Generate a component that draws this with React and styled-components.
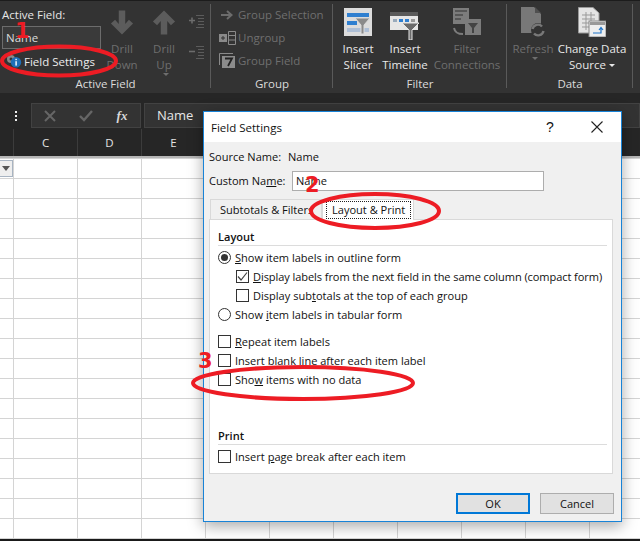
import React from "react";
import styled, { createGlobalStyle } from "styled-components";

const Global = createGlobalStyle`
  html, body { margin: 0; padding: 0; background: #fff; }
  body { width: 640px; height: 543px; overflow: hidden; font-family: "Open Sans", "Noto Sans", sans-serif; font-size: 11.05px; }
  * { box-sizing: border-box; }
`;

const Page = styled.div`
  position: relative; width: 640px; height: 543px; overflow: hidden;
  display: flex; flex-direction: column; background: #fff;
`;
const Ribbon = styled.div`
  height: 93px; flex: none; background: #333; border-top: 1px solid #1c1c1c; display: flex; color: #e6e6e6; font-size: 11.5px;
`;
const Group = styled.section`
  width: ${p => p.$w}px; flex: none; height: 90px; margin-top: 2px;
  display: flex; flex-direction: column; position: relative;
  &::after { content: ""; position: absolute; right: 0; top: 1px; width: 1px; height: 84px; background: #5a5a5a; }
`;
const GroupBody = styled.div`
  flex: 1; display: flex; align-items: flex-start; min-height: 0; padding-left: ${p => p.$pl || 0}px;
`;
const GroupName = styled.div`
  height: 17px; line-height: 16px; text-align: center; color: #dcdcdc;
`;
const ActiveCol = styled.div`
  width: 104px; flex: none; padding: 4px 0 0 2px; display: flex; flex-direction: column;
`;
const ActiveLabel = styled.div` height: 19px; line-height: 16px; color: #e6e6e6; `;
const NameBox = styled.div`
  width: 99px; height: 23px; border: 1px solid #6c6c6c; background: #3a3a3a; padding-left: 3px; line-height: 21px; color: #dcdcdc;
`;
const SettingsRow = styled.div`
  display: flex; align-items: center; gap: 2px; height: 24px; padding-left: 4px; color: #ececec; white-space: nowrap;
`;
const BigBtn = styled.div`
  width: ${p => p.$w}px; flex: none; display: flex; flex-direction: column; align-items: center;
  color: ${p => (p.$dim ? "#6e6e6e" : "#e8e8e8")}; line-height: 16px; text-align: center; white-space: nowrap;
`;
const BigIcon = styled.div` height: 36px; display: flex; align-items: center; justify-content: center; margin-top: 1px; margin-bottom: 1px; `;
const Caret = styled.span`
  display: inline-block; width: 0; height: 0; border: 3px solid transparent; border-top: 3px solid currentColor; border-bottom: 0; vertical-align: middle; margin-left: 3px;
`;
const SmallCol = styled.div`
  display: flex; flex-direction: column; gap: 16px; padding-top: 11px; padding-left: 1px;
`;
const ListCol = styled.div`
  display: flex; flex-direction: column; padding-left: 7px;
`;
const ListRow = styled.div`
  display: flex; align-items: center; gap: 2px; height: 23px; color: #6f6f6f; white-space: nowrap;
`;
const ListIcon = styled.div` width: 18px; display: flex; justify-content: center; `;

const Gap = styled.div` height: 10px; flex: none; background: #262626; `;
const FormulaBar = styled.div`
  height: 26px; flex: none; background: #262626; display: flex; align-items: stretch;
`;
const Dots = styled.div`
  width: 31px; flex: none; display: flex; flex-direction: column; align-items: center; justify-content: center; gap: 2px; padding-left: 1px;
  i { width: 2px; height: 2px; background: #eee; display: block; }
`;
const FxBox = styled.div`
  width: 110px; flex: none; height: 25px; background: #333; border: 1px solid #424242;
  display: grid; grid-template-columns: repeat(3, 36px); justify-items: center; align-items: center;
`;
const FormulaInput = styled.div`
  flex: 1; margin-left: 3px; height: 25px; background: #333; border: 1px solid #424242; color: #e6e6e6; font-size: 13px; line-height: 23px; padding-left: 12px;
`;
const FxText = styled.span`
  font-family: "Liberation Serif", serif; font-style: italic; font-weight: bold; font-size: 13px; color: #d8d8d8;
`;
const Headers = styled.div`
  height: 29px; flex: none; background: #262626; display: flex; border-bottom: 2px solid #b5b5b5;
`;
const FirstHead = styled.div` width: 14px; flex: none; border-right: 1px solid #3c3c3c; `;
const ColHead = styled.div`
  width: 64px; flex: none; border-right: 1px solid #3c3c3c; text-align: center; line-height: 28px; color: #e4e4e4; font-size: 11.5px;
`;
const Sheet = styled.div`
  flex: 1; position: relative;
  background-color: #fff;
  background-image:
    linear-gradient(to right, #d4d4d4 1px, transparent 1px),
    linear-gradient(to bottom, #d4d4d4 1px, transparent 1px);
  background-size: 64px 20px;
  background-position: 13px 0;
`;
const SheetEnd = styled.div`
  height: 4px; flex: none; background: #fff; border-top: 2px solid #1a1a1a;
`;
const FilterBtn = styled.div`
  position: absolute; left: -2px; top: 2px; width: 15px; height: 17px; background: #eee; border: 1px solid #a8b4c2; display: flex; align-items: center; justify-content: center;
  &::after { content: ""; border: 4px solid transparent; border-top: 5px solid #555; border-bottom: 0; }
`;

const Dialog = styled.div`
  position: absolute; left: 203px; top: 111px; width: 419px; height: 411px;
  border: 1px solid #1883d7; background: #f0f0f0; box-shadow: 0 4px 14px rgba(0,0,0,.35);
  display: flex; flex-direction: column; color: #111;
`;
const TitleBar = styled.div`
  height: 30px; flex: none; background: #fff; display: flex; align-items: center; padding: 0 17px 0 7px; font-size: 11.5px;
`;
const Title = styled.div` flex: 1; `;
const HelpBtn = styled.div` width: 44px; font-size: 14px; text-align: left; font-family: "Liberation Sans", sans-serif; `;
const DialogBody = styled.div` flex: 1; padding: 2px 9px 0 5px; display: flex; flex-direction: column; min-height: 0; `;
const SourceRow = styled.div` display: flex; height: 24px; align-items: center; `;
const FieldName = styled.div` width: 79px; flex: none; `;
const CustomRow = styled.div` display: flex; height: 21px; margin-top: 2px; align-items: center; `;
const FieldInput = styled.div`
  width: 252px; height: 20px; margin-left: 4px; background: #fff; border: 1px solid #adadad; padding-left: 3px; line-height: 18px;
`;
const Tabs = styled.div` display: flex; height: 21px; margin-top: 7px; align-items: flex-end; padding-left: 1px; `;
const Tab = styled.div`
  width: ${p => p.$w}px; height: ${p => (p.$active ? 21 : 20)}px; padding-left: ${p => (p.$active ? 3 : 9)}px; display: flex; align-items: center;
  background: ${p => (p.$active ? "#fff" : "#f0f0f0")}; border: 1px solid #d9d9d9; border-bottom: 0; margin-bottom: ${p => (p.$active ? -1 : 0)}px; position: relative; white-space: nowrap;
`;
const FocusRing = styled.span` border: 1px dotted #222; padding: 1px 5px; line-height: 14px; `;
const Panel = styled.div`
  width: 404px; height: 255px; flex: none; background: #fff; border: 1px solid #d9d9d9; padding: 8px 5px 0 8px; display: flex; flex-direction: column;
`;
const Heading = styled.div`
  font-weight: 600; height: 18px; line-height: 17px; border-bottom: 1px solid #dcdcdc; margin-bottom: 2px;
`;
const Option = styled.div`
  display: flex; align-items: center; gap: 4px; height: 19px; padding-left: ${p => p.$indent ? 18 : 0}px; white-space: nowrap; letter-spacing: ${p => p.$ls || 0}px;
`;
const Radio = styled.span`
  width: 13px; height: 13px; flex: none; border-radius: 50%; border: 1px solid #333; background: #fff; display: flex; align-items: center; justify-content: center;
  &::after { content: ""; width: 7px; height: 7px; border-radius: 50%; background: ${p => (p.$on ? "#333" : "transparent")}; }
`;
const Check = styled.span`
  width: 13px; height: 13px; flex: none; border: 1px solid #333; background: #fff; display: flex; align-items: center; justify-content: center;
`;
const Spacer = styled.div` height: ${p => p.$h}px; flex: none; `;
const Buttons = styled.div` display: flex; justify-content: flex-end; gap: 10px; margin-top: 19px; margin-right: -2px; `;
const Btn = styled.div`
  width: ${p => p.$w}px; height: 21px; background: #e1e1e1; border: ${p => (p.$primary ? "2px solid #0078d7" : "1px solid #adadad")}; display: flex; align-items: center; justify-content: center;
`;
const CloseBtn = styled.div` width: 14px; height: 14px; display: flex; `;

const Ellipses = styled.svg` position: absolute; left: 0; top: 0; pointer-events: none; `;
const Num = styled.span`
  position: absolute; left: ${p => p.$x}px; top: ${p => p.$y}px; color: #ed1c24; font-family: "DejaVu Sans", sans-serif; font-weight: bold; font-size: 21px; line-height: 20px;
`;

const Arrow = ({ up }) => (
  <svg width="24" height="27" viewBox="0 0 26 28" style={{ transform: up ? "none" : "scaleY(-1)" }}>
    <path d="M13 1 L25 13 L20.5 17 L16.5 12.5 V27 H9.5 V12.5 L5.5 17 L1 13 Z" fill="#5c5c5c" />
  </svg>
);
const Lines = ({ plus }) => (
  <svg width="16" height="15" viewBox="0 0 16 15">
    <path d={plus ? "M0 6.5H6M3 3.5V9.5" : "M0 6.5H6"} stroke="#6c6c6c" strokeWidth="1.6" fill="none" />
    <path d="M7 1.5H15M9 4.5H15M9 7.5H15M9 10.5H15M7 13.5H15" stroke="#5c5c5c" strokeWidth="1" />
  </svg>
);
const FieldIcon = () => (
  <svg width="16" height="14" viewBox="0 0 16 14">
    <circle cx="5" cy="5" r="4" fill="#8a8a8a" />
    <circle cx="5" cy="5" r="1.5" fill="#333" />
    <circle cx="10" cy="8.2" r="5.2" fill="#1e6fb8" />
    <rect x="9.4" y="7.2" width="1.4" height="4.4" fill="#fff" />
    <rect x="9.4" y="4.8" width="1.4" height="1.4" fill="#fff" />
  </svg>
);
const SelIcon = () => (
  <svg width="14" height="12" viewBox="0 0 14 12"><path d="M1 6H11M7 2L11.5 6L7 10" stroke="#6c6c6c" strokeWidth="2" fill="none" /></svg>
);
const UngroupIcon = () => (
  <svg width="17" height="14" viewBox="0 0 17 14">
    <rect x="0" y="3" width="8" height="8" fill="#8a8a8a" />
    <path d="M2 7H6M4 5V9" stroke="#333" />
    <path d="M9.5 .5H16.5V13.5H9.5ZM9.5 4.5H16.5M9.5 9H16.5" stroke="#8a8a8a" fill="none" />
  </svg>
);
const GroupFieldIcon = () => (
  <svg width="17" height="16" viewBox="0 0 17 16">
    <path d="M.5 12V.5H14" stroke="#8a8a8a" fill="none" />
    <rect x="3" y="3" width="13" height="12" fill="#8c8c8c" />
    <path d="M6 5.5H13L9 13" stroke="#222" strokeWidth="1.8" fill="none" />
  </svg>
);
const SlicerIcon = () => (
  <svg width="28" height="28" viewBox="0 0 28 28">
    <rect width="28" height="28" fill="#dcdcdc" />
    <rect x="3" y="5" width="22" height="4" fill="#2f7fd0" />
    <rect x="3" y="13" width="10" height="4" fill="#2f7fd0" />
    <rect x="3" y="20" width="22" height="4" fill="#aebfd6" />
    <path d="M11 10H26L20 17V26H17V17Z" fill="#8a8a8a" stroke="#dcdcdc" />
  </svg>
);
const TimelineIcon = () => (
  <svg width="30" height="36" viewBox="0 -8 30 36">
    <rect x="0" y="0" width="28" height="18" fill="#e6e6e6" />
    <rect x="0" y="0" width="28" height="4" fill="#5a5a5a" />
    <rect x="3" y="7" width="4" height="3" fill="#9ab" />
    <rect x="9" y="7" width="4" height="3" fill="#2f7fd0" />
    <rect x="15" y="7" width="4" height="3" fill="#2f7fd0" />
    <rect x="21" y="7" width="4" height="3" fill="#999" />
    <path d="M12 11H29L22 18V28H19V18Z" fill="#6c6c6c" stroke="#e6e6e6" />
  </svg>
);
const ConnIcon = () => (
  <svg width="28" height="28" viewBox="0 0 28 28">
    <rect x="0" y="0" width="16" height="16" fill="#7c7c7c" />
    <path d="M2 3H14M2 7H10M2 11H8" stroke="#4a4a4a" strokeWidth="1.6" />
    <rect x="12" y="11" width="16" height="16" fill="#7c7c7c" />
    <path d="M15 15H25L21 20V25H19V20Z" fill="#444" />
    <path d="M1 20C2 25 5 26 10 26" stroke="#7c7c7c" strokeWidth="2" fill="none" />
  </svg>
);
const RefreshIcon = () => (
  <svg width="24" height="30" viewBox="0 0 24 30">
    <path d="M0 0H13L20 7V26H0Z" fill="#787878" />
    <path d="M14 0V6H20" fill="#505050" />
    <circle cx="17" cy="23" r="7" fill="#333" />
    <path d="M11.5 22A5.5 5.5 0 0 1 21 19.5M22.5 24A5.5 5.5 0 0 1 13 26.5" stroke="#787878" strokeWidth="2.4" fill="none" />
  </svg>
);
const DataIcon = () => (
  <svg width="28" height="30" viewBox="0 0 28 30">
    <path d="M.5 .5H15L21 6V26H.5Z" fill="#e4e4e4" stroke="#999" />
    <path d="M4 8H17M4 12H17M4 16H17M4 20H12M8 5V23M13 5V23" stroke="#999" />
    <rect x="11" y="14" width="17" height="16" fill="#eee" stroke="#888" />
    <rect x="12" y="15" width="15" height="3" fill="#999" />
    <path d="M15 26H23V21M21 23L23 20.5L25 23" stroke="#1e74c8" strokeWidth="1.2" fill="none" />
  </svg>
);
const CheckMark = () => (
  <svg width="11" height="11" viewBox="0 0 11 11"><path d="M1 5.5L4 9L10 1.5" stroke="#444" strokeWidth="1.2" fill="none" /></svg>
);

const columns = ["C", "D", "E", "F", "G", "H", "I", "J", "K"];

export default function App() {
  return (
    <Page>
      <Global />
      <Ribbon>
        <Group $w={211}>
          <GroupBody>
            <ActiveCol>
              <ActiveLabel>Active Field:</ActiveLabel>
              <NameBox>Name</NameBox>
              <SettingsRow><FieldIcon />Field Settings</SettingsRow>
            </ActiveCol>
            <BigBtn $w={36} $dim><BigIcon><Arrow /></BigIcon>Drill<br />Down</BigBtn>
            <BigBtn $w={48} $dim><BigIcon><Arrow up /></BigIcon>Drill<br />Up<Caret /></BigBtn>
            <SmallCol><Lines plus /><Lines /></SmallCol>
          </GroupBody>
          <GroupName>Active Field</GroupName>
        </Group>
        <Group $w={122}>
          <GroupBody>
            <ListCol>
              <ListRow><ListIcon><SelIcon /></ListIcon>Group Selection</ListRow>
              <ListRow><ListIcon><UngroupIcon /></ListIcon>Ungroup</ListRow>
              <ListRow><ListIcon><GroupFieldIcon /></ListIcon>Group Field</ListRow>
            </ListCol>
          </GroupBody>
          <GroupName>Group</GroupName>
        </Group>
        <Group $w={174}>
          <GroupBody $pl={1}>
            <BigBtn $w={48}><BigIcon><SlicerIcon /></BigIcon>Insert<br />Slicer</BigBtn>
            <BigBtn $w={46}><BigIcon><TimelineIcon /></BigIcon>Insert<br />Timeline</BigBtn>
            <BigBtn $w={78} $dim><BigIcon><ConnIcon /></BigIcon>Filter<br />Connections</BigBtn>
          </GroupBody>
          <GroupName>Filter</GroupName>
        </Group>
        <Group $w={126}>
          <GroupBody $pl={1}>
            <BigBtn $w={50} $dim><BigIcon><RefreshIcon /></BigIcon>Refresh<br /><Caret /></BigBtn>
            <BigBtn $w={68}><BigIcon><DataIcon /></BigIcon>Change Data<br /><span>Source<Caret /></span></BigBtn>
          </GroupBody>
          <GroupName>Data</GroupName>
        </Group>
      </Ribbon>
      <Gap />
      <FormulaBar>
        <Dots><i /><i /><i /></Dots>
        <FxBox>
          <svg width="12" height="12" viewBox="0 0 12 12"><path d="M1 1L11 11M11 1L1 11" stroke="#666" strokeWidth="2" /></svg>
          <svg width="14" height="12" viewBox="0 0 14 12"><path d="M1 6L5 10L13 1" stroke="#666" strokeWidth="2.4" fill="none" /></svg>
          <FxText>fx</FxText>
        </FxBox>
        <FormulaInput>Name</FormulaInput>
      </FormulaBar>
      <Headers>
        <FirstHead />
        {columns.map(c => <ColHead key={c}>{c}</ColHead>)}
      </Headers>
      <Sheet><FilterBtn /></Sheet>
      <SheetEnd />

      <Dialog>
        <TitleBar>
          <Title>Field Settings</Title>
          <HelpBtn>?</HelpBtn>
          <CloseBtn>
            <svg width="14" height="14" viewBox="0 0 14 14"><path d="M1.5 1.5L12.5 12.5M12.5 1.5L1.5 12.5" stroke="#222" strokeWidth="1.1" /></svg>
          </CloseBtn>
        </TitleBar>
        <DialogBody>
          <SourceRow><FieldName>Source Name:</FieldName>Name</SourceRow>
          <CustomRow><FieldName>Custom Na<u>m</u>e:</FieldName><FieldInput>Name</FieldInput></CustomRow>
          <Tabs>
            <Tab $w={112}>Subtotals &amp; Filters</Tab>
            <Tab $active $w={92}><FocusRing>Layout &amp; Print</FocusRing></Tab>
          </Tabs>
          <Panel>
            <Heading>Layout</Heading>
            <Option><Radio $on /><span><u>S</u>how item labels in outline form</span></Option>
            <Option $indent $ls={-0.08}><Check><CheckMark /></Check><span><u>D</u>isplay labels from the next field in the same column (compact form)</span></Option>
            <Option $indent><Check /><span>Display sub<u>t</u>otals at the top of each group</span></Option>
            <Option><Radio /><span>Show <u>i</u>tem labels in tabular form</span></Option>
            <Spacer $h={8} />
            <Option><Check /><span><u>R</u>epeat item labels</span></Option>
            <Option><Check /><span>Insert blan<u>k</u> line after each item label</span></Option>
            <Option><Check /><span>Sho<u>w</u> items with no data</span></Option>
            <Spacer $h={38} />
            <Heading>Print</Heading>
            <Option><Check /><span>Insert <u>p</u>age break after each item</span></Option>
          </Panel>
          <Buttons>
            <Btn $primary $w={74}>OK</Btn>
            <Btn $w={74}>Cancel</Btn>
          </Buttons>
        </DialogBody>
      </Dialog>

      <Ellipses width="640" height="543" viewBox="0 0 640 543">
        <g fill="none" stroke="#ed1c24" strokeWidth="4">
          <ellipse cx="59" cy="61" rx="57" ry="14.5" />
          <ellipse cx="375" cy="211" rx="64" ry="17" />
          <ellipse cx="303" cy="383" rx="110" ry="16" />
        </g>
      </Ellipses>
      <Num $x={15} $y={21}>1</Num>
      <Num $x={305} $y={175}>2</Num>
      <Num $x={198} $y={351}>3</Num>
    </Page>
  );
}
